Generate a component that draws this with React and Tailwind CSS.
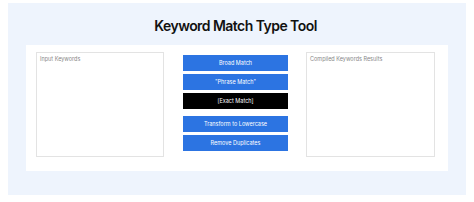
import React from "react";

const buttons = [
  { label: "Broad Match", dark: false },
  { label: "\"Phrase Match\"", dark: false },
  { label: "[Exact Match]", dark: true },
];

function App() {
  return (
    <div className="w-[474px] h-[202px] bg-white pt-[3px] px-[8px] font-['Inter',sans-serif]">
      <div className="h-[192px] bg-[#eef4fd] pt-[14px] px-[18px]">
        <h1 className="text-center text-[14px] leading-[18px] font-semibold tracking-[-0.55px] text-[#111] pr-[3px]">
          Keyword Match Type Tool
        </h1>
        <div className="mt-[10px] bg-white h-[126px] pt-[7px] px-[10px] flex gap-[19px]">
          <div className="w-[128px] h-[105px] border border-[#e3e3e3] px-[3px] py-[2px] text-[5.5px] text-[#888]">
            Input Keywords
          </div>
          <div className="w-[105px] pt-[3px] flex flex-col">
            <div className="flex flex-col gap-[3px]">
              {buttons.map((b) => (
                <button
                  key={b.label}
                  className={`h-[16px] w-full text-[5.5px] text-white flex items-center justify-center ${
                    b.dark ? "bg-black" : "bg-[#2c74e2]"
                  }`}
                >
                  {b.label}
                </button>
              ))}
            </div>
            <div className="mt-[7px] flex flex-col gap-[3px]">
              <button className="h-[16px] w-full text-[5.5px] text-white bg-[#2c74e2] flex items-center justify-center">
                Transform to Lowercase
              </button>
              <button className="h-[16px] w-full text-[5.5px] text-white bg-[#2c74e2] flex items-center justify-center">
                Remove Duplicates
              </button>
            </div>
          </div>
          <div className="ml-[-1px] w-[129px] h-[105px] border border-[#e3e3e3] px-[3px] py-[2px] text-[5.5px] text-[#888]">
            Compiled Keywords Results
          </div>
        </div>
      </div>
    </div>
  );
}

export default App;
